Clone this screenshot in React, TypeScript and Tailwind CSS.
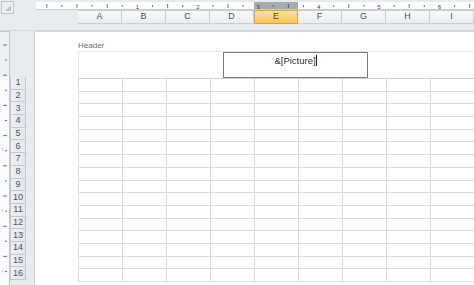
import React from 'react';

const cols = ['A', 'B', 'C', 'D', 'E', 'F', 'G', 'H', 'I'];
const rows = Array.from({ length: 16 }, (_, i) => i + 1);

const TopRuler = () => {
  // ruler starts at page x=36, zero sits on the left margin (x=77)
  const ticks = [];
  for (let i = -3; i < 28; i++) {
    const x = 41 + i * 15.1;
    if (x < 1 || x > 438) continue;
    const major = i % 4 === 0;
    const half = i % 2 === 0;
    if (major && i > 0) continue;
    ticks.push(<line key={i} x1={x} x2={x} y1={half ? 4 : 5} y2={half ? 8 : 7} stroke="#555" strokeWidth="0.8" />);
  }
  const nums = [1, 2, 3, 4, 5, 6];
  return (
    <svg width="438" height="10" className="block">
      <rect x="0" y="2" width="438" height="8" fill="#fdfdfd" />
      <rect x="218" y="2" width="44" height="8" fill="#a8aaad" />
      <line x1="0" x2="438" y1="9.5" y2="9.5" stroke="#c8ccd2" />
      {ticks}
      {nums.map((n) => (
        <text key={n} x={41 + n * 60.4} y="8.5" fontSize="6" fill="#444" textAnchor="middle" fontFamily="Liberation Sans, sans-serif">
          {n}
        </text>
      ))}
    </svg>
  );
};

const SideRuler = () => {
  const ticks = [];
  for (let i = 0; i < 18; i++) {
    const y = 14 + i * 15.1;
    const half = i % 2 === 0;
    ticks.push(<line key={i} x1={half ? 3 : 5} x2={half ? 7 : 7} y1={y} y2={y} stroke="#555" strokeWidth="0.8" />);
  }
  return (
    <svg width="10" height="254" className="block">
      <rect x="0" y="0" width="9" height="254" fill="#fbfbfc" />
      <rect x="0" y="0" width="9" height="46" fill="#eef0f3" />
      <line x1="9.5" x2="9.5" y1="0" y2="254" stroke="#c3c8cf" />
      <line x1="0" x2="9" y1="0.5" y2="0.5" stroke="#c3c8cf" />
      {ticks}
      {[120, 181, 242].map((y) => (
        <text key={y} x="4" y={y} fontSize="5" fill="#666" fontFamily="Liberation Sans, sans-serif" transform={`rotate(-90 4 ${y})`}>
          ~
        </text>
      ))}
    </svg>
  );
};

export default function App() {
  return (
    <div className="w-[474px] h-[285px] overflow-hidden bg-[#e7eaee] flex flex-col" style={{ fontFamily: '"Liberation Sans", Arial, sans-serif' }}>
      {/* top strip: corner, ruler, column headers */}
      <div className="flex h-[24px]">
        <div className="w-[36px] pl-[1px] pt-[1px]">
          <div className="w-[13px] h-[13px] border border-[#c2c7ce] bg-[#eceef1] flex items-end justify-end p-[2px]">
            <div className="w-0 h-0 border-l-[6px] border-l-transparent border-b-[6px] border-b-[#bfc4ca]" />
          </div>
        </div>
        <div className="flex-1 flex flex-col">
          <TopRuler />
          <div className="flex h-[14px]">
            <div className="w-[42px]" />
            {cols.map((c) => (
              <div
                key={c}
                className={
                  c === 'E'
                    ? 'w-[44px] flex items-center justify-center text-[9px] text-[#4a4a4a] bg-gradient-to-b from-[#fbe3a1] to-[#f6c552] border border-[#e2a33b]'
                    : 'w-[44px] flex items-center justify-center text-[9px] text-[#4b5563] bg-gradient-to-b from-[#f8f9fb] to-[#e9ecf0] border-r border-b border-t border-[#c9cfd7]'
                }
              >
                {c}
              </div>
            ))}
          </div>
        </div>
      </div>
      <div className="h-[7px] border-b border-[#d3d7dd]" />

      {/* body */}
      <div className="flex flex-1">
        <div className="w-[34px] flex">
          <SideRuler />
          <div className="w-[16px] flex flex-col pt-[46px]">
            {rows.map((r) => (
              <div
                key={r}
                className="h-[12.7px] flex items-center justify-center text-[9px] leading-none text-[#4b5563] bg-gradient-to-r from-[#eef0f3] to-[#e3e6ea] border-b border-r border-l border-[#c3c9d1]"
              >
                {r}
              </div>
            ))}
          </div>
        </div>

        <div className="flex-1 bg-white border-l border-t border-[#d5d9de] pl-[43px] flex flex-col">
          <div className="pt-[9px] h-[19px] text-[8px] leading-[10px] text-[#6b6b6b]">Header</div>
          <div className="relative h-[27px] border-t border-l border-[#e6e6e6]">
            <div className="absolute left-[144px] top-0 w-[145px] h-[26px] border border-[#7a7a7a] flex justify-center pt-[1px] text-[9.5px] text-[#333]">
              <span>&amp;[Picture]</span>
              <span className="w-px h-[11px] bg-[#222] mt-[1px]" />
            </div>
          </div>
          <div className="flex flex-col border-t border-[#d0d0d0]">
            {rows.map((r) => (
              <div key={r} className="h-[12.7px] flex border-b border-[#dcdcdc]">
                {cols.map((c) => (
                  <div key={c} className="w-[44px] shrink-0 border-l border-[#dcdcdc]" />
                ))}
              </div>
            ))}
          </div>
        </div>
      </div>
    </div>
  );
}
